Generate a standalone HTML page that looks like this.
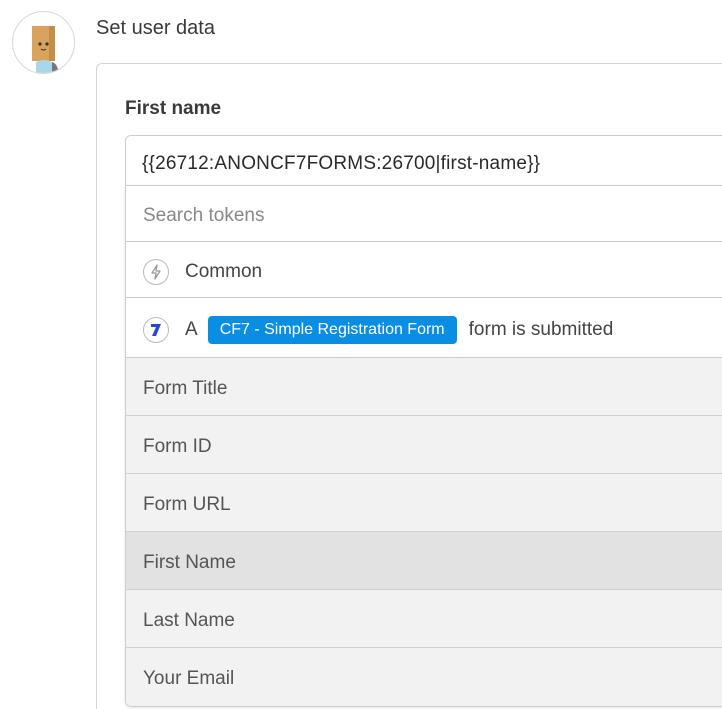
<!DOCTYPE html>
<html style="width:722px;height:709px;overflow:hidden"><head><meta charset="utf-8"><style>
*{box-sizing:border-box;margin:0;padding:0}
body{width:722px;height:709px;overflow:hidden;background:#fff;font-family:"Liberation Sans",sans-serif;color:#333;position:relative}
.av{position:absolute;left:12px;top:11px;width:63px;height:63px;border-radius:50%;border:1px solid #d6d6d6;background:#fff;overflow:hidden}
.title{position:absolute;left:96px;top:17px;font-size:20px;color:#3a3a3a}
.card{position:absolute;left:96px;top:63px;width:640px;height:646px;border:1px solid #d4d4d4;border-bottom:none;border-radius:6px 6px 0 0}
.lbl{position:absolute;left:125px;top:98px;font-size:19px;font-weight:bold;color:#3a3a3a}
.inp{position:absolute;left:125px;top:135px;width:610px;height:51px;border:1px solid #ccc;border-radius:6px 0 0 0;font-size:19px;padding:17px 0 0 16px;color:#2a2a2a;border-bottom:none;letter-spacing:.2px}
.dd{position:absolute;left:125px;top:185px;width:610px;height:522px;border:1px solid #ccc;border-radius:0 0 6px 6px;overflow:hidden;box-shadow:0 1px 3px rgba(0,0,0,.1)}
.row{height:56px;border-bottom:1px solid #ccc;font-size:19px;padding-left:17px;padding-top:4px;display:flex;align-items:center;color:#444}
.ic{width:26px;height:26px;border-radius:50%;border:1px solid #bbb;margin-right:16px;display:flex;align-items:center;justify-content:center}
.it{height:58px;border-bottom:1px solid #d0d0d0;background:#f2f2f2;font-size:19px;padding-left:17px;padding-top:4px;display:flex;align-items:center;color:#555}
.badge{background:#0a8ee4;color:#fff;font-size:16px;border-radius:4px;padding:5px 12px;margin:0 12px 0 10px}
</style></head><body>
<div class="av"><svg width="63" height="63" viewBox="0 0 63 63">
<rect x="19" y="14" width="23" height="35" fill="#d8a35c"/>
<rect x="36" y="14" width="6" height="35" fill="#c48d48"/>
<circle cx="27" cy="32" r="1.6" fill="#333"/><circle cx="34" cy="32" r="1.6" fill="#333"/>
<path d="M28 37q2.5 2 5 0" stroke="#333" fill="none" stroke-width="1"/>
<path d="M23 50 q8 -4 16 0 v14 h-16z" fill="#a8d8e8"/>
<path d="M39 50 q6 2 6 10 h-6z" fill="#777"/>
</svg></div>
<div class="title">Set user data</div>
<div class="card"></div>
<div class="lbl">First name</div>
<div class="inp">{{26712:ANONCF7FORMS:26700|first-name}}</div>
<div class="dd">
<div class="row" style="color:#888">Search tokens</div>
<div class="row"><span class="ic"><svg width="14" height="16" viewBox="0 0 14 16"><path d="M8 1 L3 9 H7 L6 15 L11 7 H7 Z" fill="none" stroke="#999" stroke-width="1.3" stroke-linejoin="round"/></svg></span>Common</div>
<div class="row" style="height:60px"><span class="ic"><svg width="14" height="16" viewBox="0 0 14 16"><path d="M2 2 H12 L7 14 H3 L7 5 H2 Z" fill="#2548d8"/></svg></span>A<span class="badge">CF7 - Simple Registration Form</span>form is submitted</div>
<div class="it">Form Title</div>
<div class="it">Form ID</div>
<div class="it">Form URL</div>
<div class="it" style="background:#e2e2e2">First Name</div>
<div class="it">Last Name</div>
<div class="it" style="border-bottom:none">Your Email</div>
</div>
</body></html>
